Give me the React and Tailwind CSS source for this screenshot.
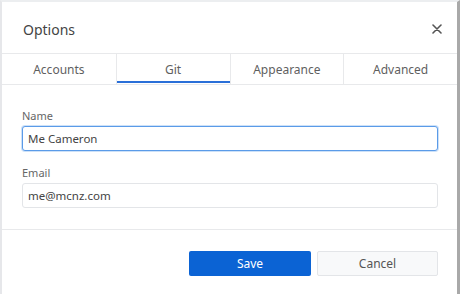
import React from "react";

const tabs = ["Accounts", "Git", "Appearance", "Advanced"];

const Field = ({ label, value, focused }) => (
  <div>
    <div className="text-[11px] leading-[14px] text-[#666] mb-[3px]">{label}</div>
    <div
      className={
        "h-[25px] rounded-[3px] bg-white flex items-center px-[5px] text-[11.5px] text-[#444] " +
        (focused
          ? "border border-[#5b9be8] shadow-[0_0_0_1px_rgba(91,155,232,0.3)]"
          : "border border-[#e3e5e8]")
      }
    >
      {value}
    </div>
  </div>
);

export default function App() {
  return (
    <div
      className="w-[460px] h-[294px] bg-white border-l-2 border-t-2 border-r-[3px] border-l-[#e6e7ea] border-t-[#eceef0] border-r-[#a9a9a9] flex flex-col overflow-hidden"
      style={{ fontFamily: '"Noto Sans", "Open Sans", sans-serif' }}
    >
      {/* header */}
      <div className="h-[52px] shrink-0 flex items-center justify-between pl-[21px] pr-[15px] pt-[3px] border-b border-[#e8e9eb]">
        <span className="text-[14px] text-[#444]">Options</span>
        <svg width="10" height="10" viewBox="0 0 10 10" className="text-[#555]">
          <path d="M1 1 L9 9 M9 1 L1 9" stroke="currentColor" strokeWidth="1.6" strokeLinecap="round" />
        </svg>
      </div>

      {/* tabs */}
      <div className="grid grid-cols-4 h-[31px] shrink-0 border-b border-[#e8e9eb]">
        {tabs.map((t, i) => (
          <div
            key={t}
            className={
              "relative flex items-center justify-center pt-[2px] text-[12px] text-[#5f5f5f] " +
              (i > 0 ? "border-l border-[#e8e9eb]" : "")
            }
          >
            {t}
            {t === "Git" && (
              <div className="absolute left-0 right-0 bottom-[1px] h-[2px] bg-[#2a6fd8]" />
            )}
          </div>
        ))}
      </div>

      {/* form */}
      <div className="flex flex-col gap-[15px] pl-[20px] pr-[19px] pt-[24px] pb-[21px] border-b border-[#e8e9eb]">
        <Field label="Name" value="Me Cameron" focused />
        <Field label="Email" value="me@mcnz.com" />
      </div>

      {/* footer */}
      <div className="flex justify-end gap-[6px] pr-[19px] pt-[21px]">
        <button className="w-[122px] h-[25px] rounded-[2px] bg-[#0b63d4] text-white text-[12px]">
          Save
        </button>
        <button className="w-[121px] h-[25px] rounded-[2px] bg-[#f8f9fa] border border-[#e3e5e8] text-[#555] text-[12px]">
          Cancel
        </button>
      </div>
    </div>
  );
}
